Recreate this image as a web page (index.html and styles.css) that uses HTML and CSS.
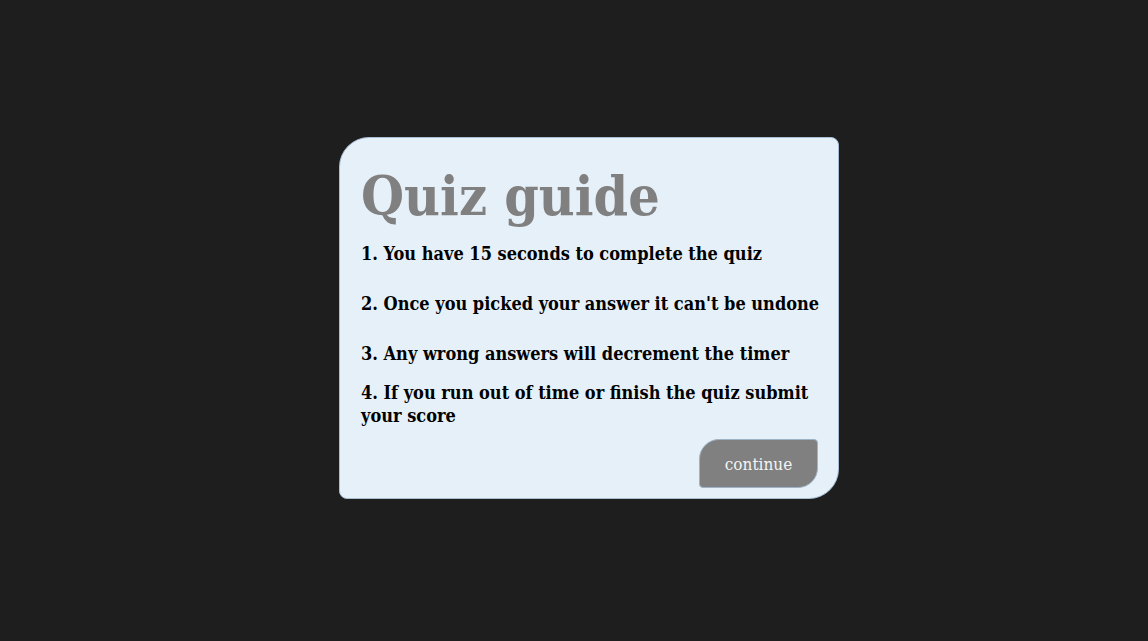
FILE: index.html
```html
<!DOCTYPE html>
<html lang="en">
<head>
    <meta charset="UTF-8">
    <meta name="viewport" content="width=device-width, initial-scale=1.0">
    <title>Quiz</title>
    <link rel="stylesheet" href="styles.css">
</head>
<body>
    <div class="guide">
        <h1>Quiz guide</h1>
        <p class="rule">1. You have 15 seconds to complete the quiz</p>
        <p class="rule">2. Once you picked your answer it can't be undone</p>
        <p class="rule">3. Any wrong answers will decrement the timer</p>
        <p class="rule last">4. If you run out of time or finish the quiz submit your score</p>
        <div class="actions">
            <button class="continue">continue</button>
        </div>
    </div>
</body>
</html>
```

FILE: styles.css
```css
html, body {
    height: 100%;
}
body {
    margin: 0;
    background: #1e1e1e;
    font-family: "DejaVu Serif Condensed", "DejaVu Serif", serif;
    font-stretch: condensed;
    display: flex;
    justify-content: center;
    align-items: center;
    padding: 0 0 5px 30px;
    box-sizing: border-box;
}
.guide {
    width: 500px;
    height: 362px;
    box-sizing: border-box;
    background: #e6f0f9;
    border: 1px solid #a7bed3;
    border-radius: 30px 8px 30px 8px;
    padding: 22px 18px 10px 21px;
    display: flex;
    flex-direction: column;
}
h1 {
    margin: 0 0 10px;
    font-size: 55px;
    line-height: 72px;
    color: #808080;
}
.rule {
    margin: 0 0 27px;
    font-size: 18px;
    font-weight: bold;
    line-height: 23px;
    color: #000;
}
.rule.last {
    margin-bottom: 0;
    margin-top: -11px;
}
.actions {
    margin-top: auto;
    padding-right: 2px;
    display: flex;
    justify-content: flex-end;
}
.continue {
    flex-shrink: 0;
    width: 119px;
    height: 49px;
    background: #808080;
    color: #f4f4f4;
    border: 1px solid #9fb3c6;
    border-radius: 20px 4px 20px 4px;
    font-family: inherit;
    font-stretch: condensed;
    font-size: 17px;
    cursor: pointer;
}
```
